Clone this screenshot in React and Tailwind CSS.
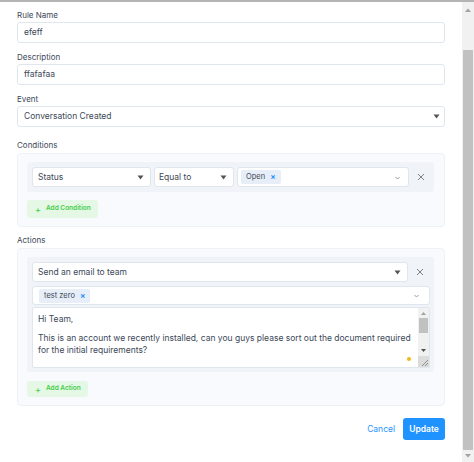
import React from 'react';

const Caret = () => (
    <svg width="7" height="5" viewBox="0 0 7 5" className="shrink-0">
        <path d="M0.5 0.5 L6.5 0.5 L3.5 4.5 Z" fill="#555" />
    </svg>
);

const Chevron = () => (
    <svg width="7" height="5" viewBox="0 0 7 5" className="shrink-0">
        <path d="M1.5 2 L3.5 4 L5.5 2" fill="none" stroke="#999" strokeWidth="1" />
    </svg>
);

const CloseX = () => (
    <svg width="8" height="8" viewBox="0 0 8 8">
        <path d="M1 1 L7 7 M7 1 L1 7" stroke="#6b7280" strokeWidth="0.9" />
    </svg>
);

const Field = ({ label, children, className = '' }) => (
    <div className={className}>
        <div className="h-[14px] text-[8px] leading-[14px] text-[#3c4858]">{label}</div>
        {children}
    </div>
);

const Chip = ({ text }) => (
    <span className="flex items-center gap-[5px] h-[14px] px-[5px] rounded-[2px] bg-[#e7eef7] text-[7.5px] text-[#3c4858] whitespace-nowrap">
        {text}
        <span className="text-[#1f93ff] text-[8px] font-bold leading-none">×</span>
    </span>
);

const AddButton = ({ text, className = '' }) => (
    <div className={`flex items-center gap-[5px] pl-[8px] pr-[7px] rounded-[3px] bg-[#e5f8e6] text-[6.5px] font-semibold text-[#44ce4b] whitespace-nowrap ${className}`}>
        <span className="text-[9px] font-normal leading-none">+</span>
        {text}
    </div>
);

export default function App() {
    return (
        <div className="w-[474px] h-[462px] bg-white flex flex-col overflow-hidden" style={{ fontFamily: 'Inter, "Noto Sans", sans-serif' }}>
            <div className="h-[2px] bg-[#b4b4b4] shrink-0" />
            <div className="flex flex-1 min-h-0">
                <div className="flex-1 px-[17px] pt-[6px]">
                    <Field label="Rule Name">
                        <div className="h-[21px] border border-[#e0e6ed] rounded-[3px] px-[6px] flex items-center text-[8.5px] text-[#3c4858]">efeff</div>
                    </Field>
                    <Field label="Description" className="mt-[7px]">
                        <div className="h-[21px] border border-[#e0e6ed] rounded-[3px] px-[6px] flex items-center text-[8.5px] text-[#3c4858]">ffafafaa</div>
                    </Field>
                    <Field label="Event" className="mt-[7px]">
                        <div className="h-[21px] border border-[#e0e6ed] rounded-[3px] pl-[6px] pr-[4px] flex items-center justify-between text-[8.5px] text-[#3c4858]">
                            Conversation Created
                            <Caret />
                        </div>
                    </Field>

                    <Field label="Conditions" className="mt-[11px]">
                        <div className="mt-[1px] h-[74px] border border-[#eef2f6] bg-[#f8fafd] rounded-[4px] pt-[8px] pl-[9px] pr-[10px]">
                            <div className="h-[30px] bg-[#f0f4f8] rounded-[3px] flex items-center pl-[5px] pr-[9px]">
                                <div className="w-[119px] h-[20px] bg-white border border-[#e0e6ed] rounded-[3px] pl-[5px] pr-[6px] flex items-center justify-between text-[8.5px] text-[#3c4858]">
                                    Status
                                    <Caret />
                                </div>
                                <div className="ml-[3px] w-[80px] h-[20px] bg-white border border-[#e0e6ed] rounded-[3px] pl-[4px] pr-[6px] flex items-center justify-between text-[8.5px] text-[#3c4858]">
                                    Equal to
                                    <Caret />
                                </div>
                                <div className="ml-[3px] w-[172px] h-[20px] bg-white border border-[#e0e6ed] rounded-[3px] pl-[3px] pr-[7px] flex items-center justify-between">
                                    <Chip text="Open" />
                                    <Chevron />
                                </div>
                                <div className="ml-auto">
                                    <CloseX />
                                </div>
                            </div>
                            <AddButton text="Add Condition" className="mt-[8px] w-fit h-[18px]" />
                        </div>
                    </Field>

                    <Field label="Actions" className="mt-[6px]">
                        <div className="mt-[1px] h-[158px] border border-[#eef2f6] bg-[#f8fafd] rounded-[4px] pt-[8px] pl-[9px] pr-[10px]">
                            <div className="h-[115px] bg-[#f0f4f8] rounded-[3px] pt-[5px] pl-[5px] pr-[4px]">
                                <div className="flex items-center">
                                    <div className="w-[376px] h-[20px] bg-white border border-[#e0e6ed] rounded-[3px] pl-[5px] pr-[6px] flex items-center justify-between text-[8.5px] text-[#3c4858]">
                                        Send an email to team
                                        <Caret />
                                    </div>
                                    <div className="ml-[8px]">
                                        <CloseX />
                                    </div>
                                </div>
                                <div className="mt-[4px] h-[19px] bg-white border border-[#e0e6ed] rounded-[3px] pl-[6px] pr-[9px] flex items-center justify-between">
                                    <Chip text="test zero" />
                                    <Chevron />
                                </div>
                                <div className="mt-[2px] h-[61px] bg-white border border-[#e0e6ed] rounded-[2px] flex">
                                    <div className="flex-1 pl-[5px] pt-[5px] pr-[4px] text-[8.5px] leading-[12px] text-[#3c4858] relative">
                                        <div>Hi Team,</div>
                                        <div className="mt-[7px]">This is an account we recently installed, can you guys please sort out the document required for the initial requirements?</div>
                                        <span className="absolute right-[7px] bottom-[6px] w-[4px] h-[4px] rounded-full bg-[#f5b617]" />
                                    </div>
                                    <div className="w-[11px] bg-[#f1f1f1] flex flex-col items-center">
                                        <svg width="7" height="10" viewBox="0 0 7 10"><path d="M1 7 L3.5 4 L6 7 Z" fill="#a3a3a3" /></svg>
                                        <div className="w-[9px] h-[15px] bg-[#c1c1c1]" />
                                        <div className="flex-1" />
                                        <svg width="7" height="10" viewBox="0 0 7 10"><path d="M1 3 L6 3 L3.5 6 Z" fill="#505050" /></svg>
                                        <div className="w-[11px] h-[11px] bg-[#dcdcdc] flex items-end justify-end">
                                            <svg width="9" height="9" viewBox="0 0 9 9"><path d="M8 2 L2 8 M8 5 L5 8" stroke="#909090" strokeWidth="1" /></svg>
                                        </div>
                                    </div>
                                </div>
                            </div>
                            <AddButton text="Add Action" className="mt-[9px] w-fit h-[16px]" />
                        </div>
                    </Field>

                    <div className="mt-[12px] flex items-center justify-end">
                        <span className="text-[8.5px] text-[#1f93ff] mr-[8px]">Cancel</span>
                        <div className="w-[42px] h-[22px] rounded-[3px] bg-[#1f93ff] flex items-center justify-center text-[8.5px] font-semibold text-white">Update</div>
                    </div>
                </div>

                <div className="w-[12px] bg-[#f1f1f1] flex flex-col items-center shrink-0">
                    <svg width="8" height="12" viewBox="0 0 8 12" className="mt-[2px]"><path d="M1 8 L4 4.5 L7 8 Z" fill="#a3a3a3" /></svg>
                    <div className="mt-[34px] w-[10px] flex-1 bg-[#c1c1c1]" />
                    <svg width="8" height="12" viewBox="0 0 8 12"><path d="M1 4 L7 4 L4 7.5 Z" fill="#a3a3a3" /></svg>
                </div>
            </div>
        </div>
    );
}
